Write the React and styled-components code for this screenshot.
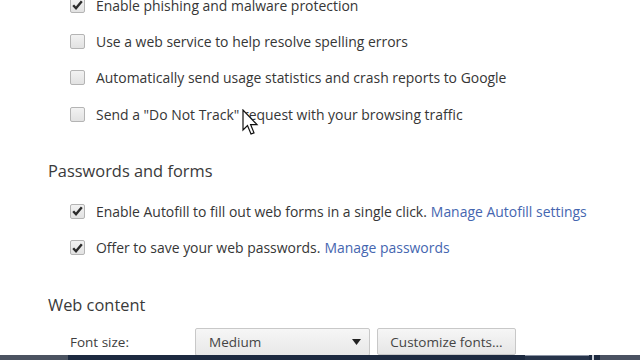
import React from "react";
import styled, { createGlobalStyle } from "styled-components";

const Global = createGlobalStyle`
  html, body { margin: 0; padding: 0; background: #fff; }
  body { font-family: "Open Sans", "Noto Sans", sans-serif; }
`;

const Screen = styled.div`
  width: 640px;
  height: 360px;
  display: flex;
  flex-direction: column;
  overflow: hidden;
  position: relative;
  background: #fff;
`;

const Content = styled.div`
  flex: 1;
  overflow: hidden;
  display: flex;
  flex-direction: column;
  padding-left: 48px;
`;

const Section = styled.div`
  display: flex;
  flex-direction: column;
  margin-top: ${(p) => p.$top}px;
`;

const Heading = styled.div`
  font-size: 16.4px;
  line-height: 20px;
  color: #3a3a3a;
  margin-bottom: ${(p) => p.$after}px;
`;

const Row = styled.label`
  display: flex;
  align-items: center;
  height: 36.3px;
  padding-left: 22px;
  font-size: 13.95px;
  color: #363636;
  white-space: nowrap;
`;

const Box = styled.span`
  width: 13px;
  height: 13px;
  border: 1px solid #b4b4b4;
  border-radius: 2px;
  background: linear-gradient(#f2f2f2, #e2e2e2);
  margin-right: 11px;
  display: flex;
  align-items: center;
  justify-content: center;
  flex: none;
`;

const Link = styled.span`
  color: #4566b0;
  margin-left: 4px;
`;

const FormRow = styled.div`
  display: flex;
  align-items: center;
  padding-left: 22px;
  margin-top: 13px;
  gap: 7px;
  font-size: 13.5px;
  color: #404040;
`;

const FieldLabel = styled.span`
  width: 118px;
`;

const Select = styled.div`
  width: 175px;
  height: 28px;
  box-sizing: border-box;
  border: 1px solid #c8c8c8;
  border-radius: 2px;
  background: linear-gradient(#f6f6f6, #e8e8e8);
  display: flex;
  align-items: center;
  justify-content: space-between;
  padding: 0 8px 0 13px;
  color: #444;
`;

const Button = styled.div`
  width: 139px;
  height: 27px;
  box-sizing: border-box;
  border: 1px solid #c8c8c8;
  border-radius: 2px;
  background: linear-gradient(#f6f6f6, #e6e6e6);
  display: flex;
  align-items: center;
  justify-content: center;
  color: #444;
`;

const Taskbar = styled.div`
  height: 5px;
  flex: none;
  display: flex;
  background: #1d2a40;
`;

const TaskSeg = styled.div`
  width: ${(p) => p.$w}px;
  margin-left: ${(p) => p.$ml || 0}px;
  background: ${(p) => p.$bg};
  border-top: 1px solid ${(p) => p.$edge || p.$bg};
`;

const Cursor = styled.svg`
  position: absolute;
  left: 242px;
  top: 109px;
`;

const Check = () => (
  <svg width="11" height="10" viewBox="0 0 11 10">
    <path d="M1.2 5.2 L4 8.2 L9.8 1.2" fill="none" stroke="#2b2b2b" strokeWidth="2.4" strokeLinejoin="miter" />
  </svg>
);

const Option = ({ checked, children }) => (
  <Row>
    <Box>{checked && <Check />}</Box>
    {children}
  </Row>
);

export default function App() {
  return (
    <Screen>
      <Global />
      <Content>
        <Section $top={-13}>
          <Option checked>Enable phishing and malware protection</Option>
          <Option>Use a web service to help resolve spelling errors</Option>
          <Option>Automatically send usage statistics and crash reports to Google</Option>
          <Option>Send a "Do Not Track" request with your browsing traffic</Option>
        </Section>
        <Section $top={29}>
          <Heading $after={12}>Passwords and forms</Heading>
          <Option checked>
            Enable Autofill to fill out web forms in a single click.
            <Link>Manage Autofill settings</Link>
          </Option>
          <Option checked>
            Offer to save your web passwords.
            <Link>Manage passwords</Link>
          </Option>
        </Section>
        <Section $top={29}>
          <Heading $after={0}>Web content</Heading>
          <FormRow>
            <FieldLabel>Font size:</FieldLabel>
            <Select>
              <span>Medium</span>
              <svg width="9" height="6" viewBox="0 0 9 6">
                <path d="M0 0 H9 L4.5 6 Z" fill="#222" />
              </svg>
            </Select>
            <Button>Customize fonts...</Button>
          </FormRow>
        </Section>
      </Content>
      <Taskbar>
        <TaskSeg $w={68} $bg="#4b5361" />
        <TaskSeg $w={64} $ml={457} $bg="#27344a" $edge="#8a93a3" />
        <TaskSeg $w={2} $ml={3} $bg="#c9ced6" />
        <TaskSeg $w={40} $ml={6} $bg="#4a5262" />
      </Taskbar>
      <Cursor width="18" height="28" viewBox="0 0 18 28">
        <path d="M1 1 L1 21 L5.5 16.5 L9 25 L12 23.8 L8.6 15.6 L15 15.6 Z" fill="#fff" stroke="#111" strokeWidth="1.2" strokeLinejoin="miter" />
      </Cursor>
    </Screen>
  );
}
